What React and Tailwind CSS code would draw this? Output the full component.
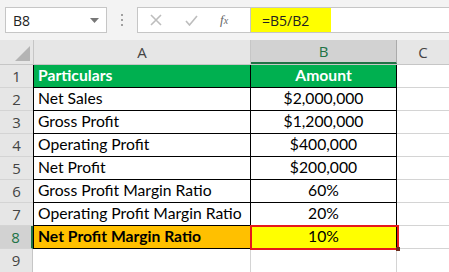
import React from "react";

const rows = [
  { n: 1, a: "Particulars", b: "Amount", head: true },
  { n: 2, a: "Net Sales", b: "$2,000,000" },
  { n: 3, a: "Gross Profit", b: "$1,200,000" },
  { n: 4, a: "Operating Profit", b: "$400,000" },
  { n: 5, a: "Net Profit", b: "$200,000" },
  { n: 6, a: "Gross Profit Margin Ratio", b: "60%" },
  { n: 7, a: "Operating Profit Margin Ratio", b: "20%" },
  { n: 8, a: "Net Profit Margin Ratio", b: "10%", sel: true },
];

const cellFont = { fontFamily: "Lato, 'Open Sans', sans-serif" };

export default function App() {
  return (
    <div className="w-[449px] h-[272px] overflow-hidden bg-white relative" style={{ fontFamily: "'Open Sans', 'Noto Sans', sans-serif" }}>
      {/* toolbar */}
      <div className="h-[40px] bg-[#f3f3f3] flex items-start pt-[7px]">
        <div className="ml-[5px] w-[102px] h-[26px] bg-white border border-[#c6c6c6] flex items-center justify-between pl-[7px] pr-[7px]">
          <span className="text-[14px] text-[#222]">B8</span>
          <svg width="9" height="5" viewBox="0 0 9 5"><path d="M0 0H9L4.5 5Z" fill="#777" /></svg>
        </div>
        <div className="w-[30px] h-[26px] flex flex-col items-center justify-center gap-[3px]">
          <span className="w-[2px] h-[2px] bg-[#a0a0a0]" />
          <span className="w-[2px] h-[2px] bg-[#a0a0a0]" />
          <span className="w-[2px] h-[2px] bg-[#a0a0a0]" />
        </div>
        <div className="w-[113px] h-[26px] bg-white border border-[#c6c6c6] border-r-0 flex items-center">
          <svg className="ml-[12px]" width="12" height="12" viewBox="0 0 12 12"><path d="M1 1L11 11M11 1L1 11" stroke="#bdbdbd" strokeWidth="1.6" /></svg>
          <svg className="ml-[23px]" width="13" height="11" viewBox="0 0 13 11"><path d="M1 6L4.5 10L12 1" stroke="#bdbdbd" strokeWidth="1.6" fill="none" /></svg>
          <span className="ml-[22px] text-[13px] italic text-[#666]" style={{ fontFamily: "'Liberation Serif', serif" }}>f<span className="text-[10px]">x</span></span>
        </div>
        <div className="flex-1 h-[26px] bg-white border border-[#c6c6c6] border-r-0 flex items-center">
          <div className="w-[80px] h-full bg-[#ffff00] flex items-center pl-[11px] text-[14px] text-[#222]">=B5/B2</div>
        </div>
      </div>
      {/* column header */}
      <div className="flex h-[25px] bg-[#e6e6e6] border-b border-[#c6c6c6] text-[15px] text-[#444]">
        <div className="w-[34px] shrink-0 border-r border-[#c6c6c6] relative">
          <svg className="absolute right-[3px] bottom-[3px]" width="15" height="15" viewBox="0 0 15 15"><path d="M15 0V15H0Z" fill="#b4b4b4" /></svg>
        </div>
        <div className="w-[217px] shrink-0 border-r border-[#c6c6c6] flex items-center justify-center">A</div>
        <div className="w-[146px] shrink-0 bg-[#d2d2d2] border-r border-[#ababab] border-b-2 border-b-[#217346] flex items-center justify-center text-[#217346]">B</div>
        <div className="flex-1 flex items-center justify-center">C</div>
      </div>
      {rows.map((r) => (
        <div key={r.n} className="flex h-[23px]">
          <div className={"w-[33px] shrink-0 flex items-center justify-center text-[15px] border-b border-[#d4d4d4] " + (r.sel ? "bg-[#d2d2d2] text-[#217346] border-r-2 border-r-[#217346]" : "bg-[#e6e6e6] text-[#444]")}>{r.n}</div>
          <div className={"w-[218px] shrink-0 flex items-center pl-[4px] border-l border-b border-r border-black text-[15.7px] whitespace-nowrap overflow-hidden " + (r.head ? "bg-[#00b050] text-white font-bold" : r.sel ? "bg-[#ffc000] text-black font-bold" : "text-black")} style={cellFont}>{r.a}</div>
          <div className={"w-[146px] shrink-0 flex items-center justify-center border-b border-r border-black text-[15.7px] " + (r.head ? "bg-[#00b050] text-white font-bold" : r.sel ? "bg-[#ffff00] text-black" : "text-black")} style={cellFont}>{r.b}</div>
          <div className="flex-1 border-b border-[#d4d4d4]" />
        </div>
      ))}
      <div className="flex h-[23px]">
        <div className="w-[33px] shrink-0 flex items-center justify-center text-[15px] bg-[#e6e6e6] text-[#444] border-r border-[#c6c6c6]">9</div>
        <div className="w-[218px] shrink-0 border-r border-[#d4d4d4]" />
        <div className="w-[146px] shrink-0 border-r border-[#d4d4d4]" />
        <div className="flex-1" />
      </div>
      {/* selection overlay */}
      <div className="absolute left-[250px] top-[225px] w-[149px] h-[25px] border-[2.5px] border-[#e5191c] pointer-events-none" />
      <div className="absolute left-[396px] top-[247px] w-[4px] h-[4px] bg-[#6b2b1c]" />
    </div>
  );
}
